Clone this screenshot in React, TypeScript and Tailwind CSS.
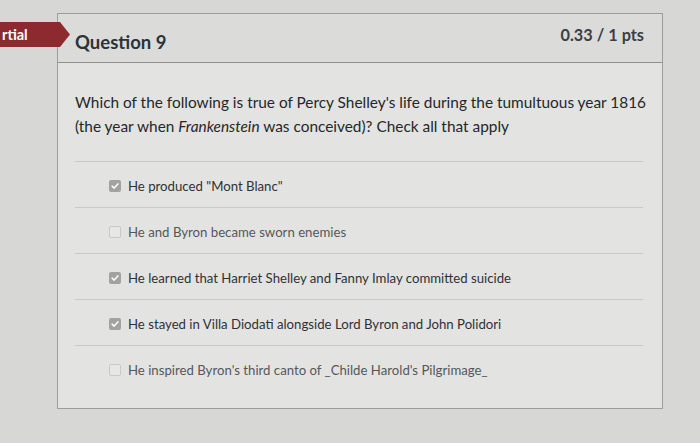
// Quiz review card: "Question 9" with multi-answer checkboxes, partial credit badge.

const ANSWERS = [
  { text: 'He produced "Mont Blanc"', checked: true },
  { text: "He and Byron became sworn enemies", checked: false },
  { text: "He learned that Harriet Shelley and Fanny Imlay committed suicide", checked: true },
  { text: "He stayed in Villa Diodati alongside Lord Byron and John Polidori", checked: true },
  { text: "He inspired Byron's third canto of _Childe Harold's Pilgrimage_", checked: false },
];

export default function App() {
  return (
    <div className="relative h-[443px] w-[700px] overflow-hidden bg-[#d7d7d5] pl-[57px] pt-[13px] font-['Lato',sans-serif]">
      {/* -- Card --------------------------------------------------------- */}
      <div className="h-[396px] w-[606px] border border-[#9d9d9b] bg-[#e3e3e1]">
        <div className="flex h-[49px] items-start justify-between border-b border-[#8f8f8d] bg-[#dbdbd9] pl-[17px] pr-[18px]">
          <h2 className="pt-[15px] text-[18.5px] font-bold leading-[26px] text-[#2b3339]">Question 9</h2>
          <span className="pt-[10px] text-[16.3px] font-bold leading-[22px] text-[#3a3f44]">0.33 / 1 pts</span>
        </div>

        <div className="pl-[17px] pr-[19px]">
          <p className="whitespace-nowrap pt-[27px] text-[15.4px] leading-[24px] text-[#25282b]">
            Which of the following is true of Percy Shelley's life during the tumultuous year 1816
            <br />
            (the year when <i>Frankenstein</i> was conceived)? Check all that apply
          </p>

          <div className="mt-[23px]">
            {ANSWERS.map((a) => (
              <AnswerRow key={a.text} {...a} />
            ))}
          </div>
        </div>
      </div>

      {/* -- Partial badge overlapping card edge -------------------------- */}
      <div className="absolute left-0 top-[22px] flex h-[25px] w-[70px] items-center bg-[#8c2a30] pl-[2px] text-[14.5px] font-bold text-white [clip-path:polygon(0_0,calc(100%-10px)_0,100%_50%,calc(100%-10px)_100%,0_100%)]">
        rtial
      </div>
    </div>
  );
}

function AnswerRow({ text, checked }: { text: string; checked: boolean }) {
  return (
    <div className="flex h-[46px] items-center gap-[7px] border-t border-[#c9c9c7] pl-[34px] pt-[3px]">
      {checked ? (
        <span className="flex h-[12px] w-[12px] items-center justify-center rounded-[2px] bg-[#a2a2a0]">
          <svg viewBox="0 0 12 12" className="h-[10px] w-[10px]">
            <path d="M2.5 6.2 5 8.5 9.5 3.5" fill="none" stroke="#fff" strokeWidth="1.8" strokeLinecap="round" strokeLinejoin="round" />
          </svg>
        </span>
      ) : (
        <span className="h-[12px] w-[12px] rounded-[2px] border border-[#c9c9c7] bg-[#e7e7e5]" />
      )}
      <span className={`text-[13.2px] leading-[18px] ${checked ? "text-[#2f3235]" : "text-[#55585b]"}`}>{text}</span>
    </div>
  );
}
